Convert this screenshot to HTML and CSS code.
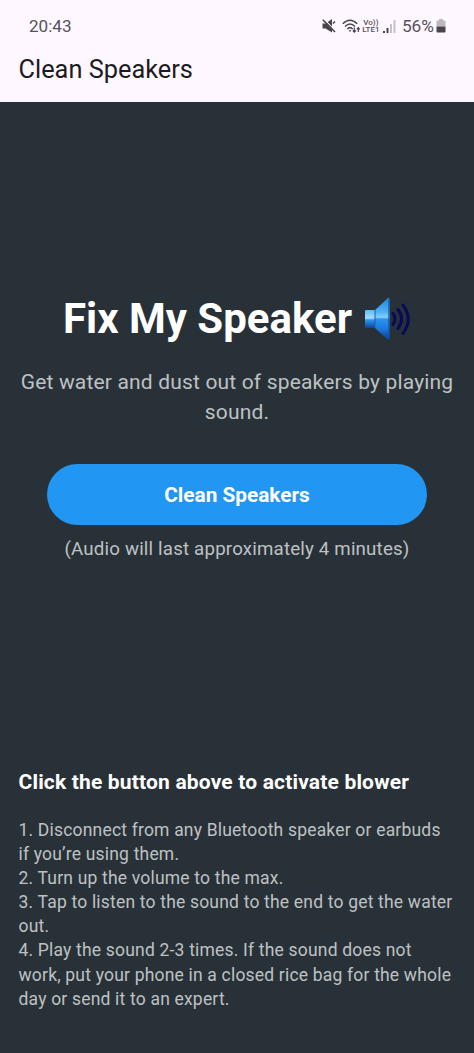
FILE: index.html
```html
<!DOCTYPE html>
<html lang="en">
<head>
  <meta charset="UTF-8" />
  <title>Clean Speakers</title>
  <meta name="viewport" content="width=device-width, initial-scale=1.0"/>
  <link rel="stylesheet" href="styles.css">
</head>
<body>

  <header class="top">
    <div class="status">
      <span class="time">20:43</span>
      <div class="status-icons">
        <!-- muted -->
        <svg class="mute" width="14" height="14" viewBox="0 0 14 14">
          <path d="M.5 4.500h3L10 0v13.500L3.500 9.500h-3z" fill="#49454d"/>
          <path d="M1.500 -.5 14 12.500" stroke="#fef7ff" stroke-width="1.200"/>
          <path d="M.8 .8 13 13M11 4.500 13 2.500" stroke="#49454d" stroke-width="1.600"/>
        </svg>
        <!-- wifi -->
        <svg class="wifi" width="19" height="15" viewBox="0 0 19 15" fill="none" stroke="#49454d" stroke-width="1.500">
          <path d="M.8 4.800Q8 -2.200 15.200 4.800M3 7.500Q8 2.600 13 7.500M5.300 10Q8 7.300 10.700 10"/>
          <path d="M6.500 11.200h3L8 13z" fill="#49454d" stroke="none"/>
          <path d="M12.300 8.500v4.500M10.800 11.500l1.500 1.700 1.500-1.700M16.300 13V8.800M14.800 10.300l1.500-1.700 1.500 1.700" stroke-width="1.200"/>
        </svg>
        <div class="lte"><span>Vo))</span><span>LTE1</span></div>
        <!-- signal -->
        <svg class="signal" width="13" height="13" viewBox="0 0 13 13">
          <path d="M0 11h2v2H0zM3.500 8h2v5h-2z" fill="#49454d"/>
          <path d="M7 4h2v9H7zM10.500 0h2v13h-2z" fill="#c6c0c9"/>
        </svg>
        <span class="percent">56%</span>
        <svg class="battery" width="10" height="14" viewBox="0 0 10 14">
          <path d="M3 0h4v1.500h1.500Q9.500 1.500 9.500 2.500V7.500H.5v-5Q.5 1.500 1.500 1.500H3z" fill="#bdb7c0"/>
          <path d="M.5 7.500h9v5q0 1-1 1h-7q-1 0-1-1z" fill="#49454d"/>
        </svg>
      </div>
    </div>
    <div class="app-title">Clean Speakers</div>
  </header>

  <main>
    <section class="hero">
      <h1>
        <span>Fix My Speaker</span>
        <svg class="speaker" width="46" height="44" viewBox="0 0 46 44">
          <defs>
            <linearGradient id="cone" x1="0" y1="0" x2="0" y2="1">
              <stop offset="0" stop-color="#2385d8"/>
              <stop offset=".32" stop-color="#4caef5"/>
              <stop offset=".46" stop-color="#83cffc"/>
              <stop offset=".5" stop-color="#2b94ed"/>
              <stop offset=".75" stop-color="#1976d8"/>
              <stop offset="1" stop-color="#073987"/>
            </linearGradient>
            <linearGradient id="box" x1="0" y1="0" x2="0" y2="1">
              <stop offset="0" stop-color="#58bcf8"/>
              <stop offset=".45" stop-color="#a4ddff"/>
              <stop offset=".55" stop-color="#2e97eb"/>
              <stop offset="1" stop-color="#0d419b"/>
            </linearGradient>
          </defs>
          <path d="M10 13 23 1q1.500-1 1.500 1v40q0 2-1.500 1L10 31z" fill="url(#cone)"/>
          <path d="M1 13h9v18H1q-1 0-1-1V14q0-1 1-1z" fill="url(#box)"/>
          <path d="M10 13v18" stroke="#1261b5"/>
          <path d="M23.800 2v40" stroke="#1558a8"/>
          <path d="M28 16.500q4 5.500 0 11M33 12.500q7 9.500 0 19M38 8q10.500 14 0 28.500" fill="none" stroke="#080a59" stroke-width="3" stroke-linecap="round"/>
        </svg>
      </h1>
      <p class="subtitle">Get water and dust out of speakers by playing<br>sound.</p>
      <button class="btn-clean">Clean Speakers</button>
      <p class="note">(Audio will last approximately 4 minutes)</p>
    </section>

    <section class="help">
      <h2>Click the button above to activate blower</h2>
      <p class="steps">
        1. Disconnect from any Bluetooth speaker or earbuds<br>
        if you’re using them.<br>
        2. Turn up the volume to the max.<br>
        3. Tap to listen to the sound to the end to get the water<br>
        out.<br>
        4. Play the sound 2-3 times. If the sound does not<br>
        work, put your phone in a closed rice bag for the whole<br>
        day or send it to an expert.
      </p>
    </section>
  </main>

</body>
</html>
```

FILE: styles.css
```css
body {
  background: #293138;
  color: #bec1c3;
  font-family: Roboto, sans-serif;
  margin: 0;
  height: 1053px;
  overflow: hidden;
  display: flex;
  flex-direction: column;
  white-space: nowrap;
}

h1, h2, p {
  margin: 0;
}

.top {
  background: #fef7ff;
  height: 102px;
  flex: none;
}

.status {
  display: flex;
  justify-content: space-between;
  align-items: center;
  height: 52px;
  padding: 0 28px 0 29px;
  color: #57525a;
}

.time {
  font-size: 17.1px;
}

.status-icons {
  display: flex;
  align-items: center;
}

.wifi {
  margin-left: 6px;
}

.lte {
  display: flex;
  flex-direction: column;
  align-items: center;
  width: 18px;
  margin-left: 1px;
  font-size: 8px;
  line-height: 7.5px;
  font-weight: 500;
}

.signal {
  margin-left: 3px;
}

.percent {
  font-size: 17.3px;
  margin-left: 6px;
}

.battery {
  margin-left: 2px;
}

.app-title {
  padding-left: 18.5px;
  font-size: 25.35px;
  line-height: 34px;
  color: #1d1b20;
}

main {
  flex: 1;
  display: flex;
  flex-direction: column;
}

.hero {
  display: flex;
  flex-direction: column;
  align-items: center;
  padding-top: 192px;
  text-align: center;
}

h1 {
  display: flex;
  align-items: center;
  gap: 13px;
  font-size: 42px;
  line-height: 50px;
  color: #fff;
}

.subtitle {
  margin-top: 23px;
  font-size: 21px;
  line-height: 30px;
  letter-spacing: 0.17px;
}

.btn-clean {
  width: 380px;
  height: 61px;
  margin-top: 37px;
  border: none;
  border-radius: 31px;
  background: #2196f3;
  color: #fff;
  font-family: inherit;
  font-size: 20.8px;
  font-weight: bold;
}

.note {
  margin-top: 11px;
  font-size: 18.7px;
  line-height: 26px;
  letter-spacing: 0.18px;
}

.help {
  margin-top: 206px;
  padding-left: 18.5px;
}

h2 {
  font-size: 21px;
  line-height: 28px;
  letter-spacing: 0.17px;
  color: #fff;
}

.steps {
  margin-top: 22px;
  font-size: 17.5px;
  line-height: 24.1px;
  letter-spacing: 0.19px;
}
```
